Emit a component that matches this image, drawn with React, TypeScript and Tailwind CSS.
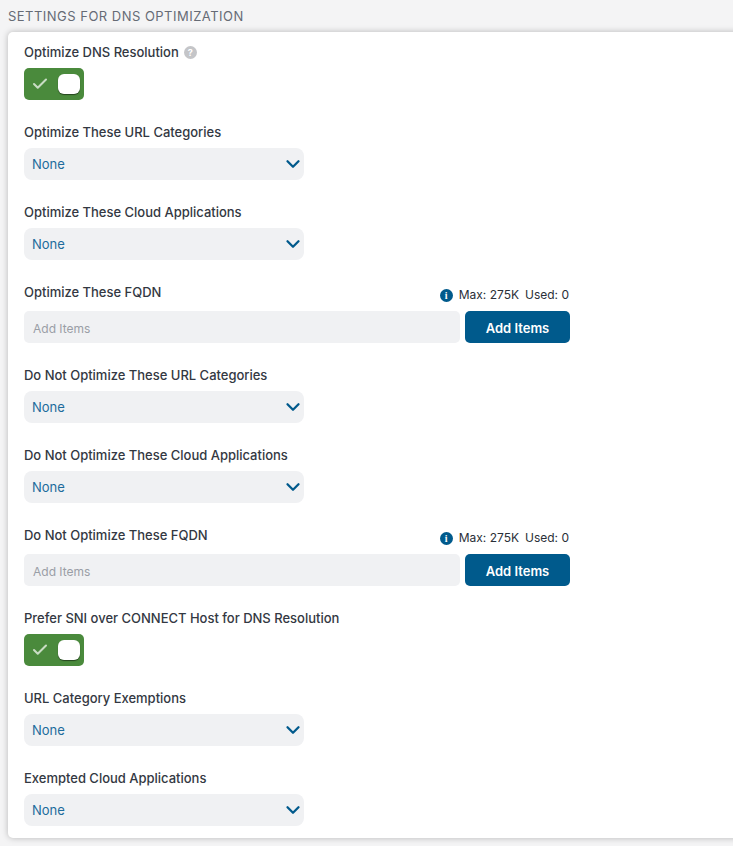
import React from 'react';
import { Check, ChevronDown } from 'lucide-react';

const Toggle = () => (
  <div className="w-[60px] h-8 rounded-[5px] bg-[#4a8a3c] flex items-center justify-between pl-[7px] pr-[4px]">
    <Check className="w-[18px] h-[18px] text-[#c9dcc4]" strokeWidth={2.75} />
    <div className="w-[22px] h-[20px] rounded-[6px] bg-white shadow-[0_1px_1px_rgba(0,0,0,0.5)]" />
  </div>
);

const Select = () => (
  <div className="w-[280px] h-8 rounded-[8px] bg-[#f0f1f3] flex items-center justify-between pl-2">
    <span className="text-[13px] text-[#1e6c9c] translate-y-[1px]">None</span>
    <ChevronDown className="w-[22px] h-[22px] text-[#005a8c]" strokeWidth={2.5} />
  </div>
);

const FqdnInput = () => (
  <div className="flex gap-[5px]">
    <div className="w-[436px] h-8 rounded-[5px] bg-[#f0f1f3] flex items-center pl-[9px]">
      <span className="text-xs text-[#9a9ea6] translate-y-[2px]">Add Items</span>
    </div>
    <button className="w-[105px] h-8 rounded-[5px] bg-[#005a8c] text-white text-[13px] font-semibold">
      <span className="inline-block translate-y-[2px]">Add Items</span>
    </button>
  </div>
);

const Label = ({ children }: { children: React.ReactNode }) => (
  <div className="h-4 leading-4 text-[13px] font-[450] tracking-[-0.01px] text-[#333842] mb-2">{children}</div>
);

const SelectField = ({ label }: { label: string }) => (
  <div>
    <Label>{label}</Label>
    <Select />
  </div>
);

const FqdnField = ({ label }: { label: string }) => (
  <div>
    <div className="w-[545px] h-4 flex items-center justify-between mb-[11px]">
      <span className="text-[13px] leading-4 font-[450] tracking-[-0.01px] text-[#333842]">{label}</span>
      <span className="flex items-center text-xs text-[#2a2f38] translate-y-[3px]">
        <span className="w-[13px] h-[13px] mr-[6px] rounded-full bg-[#005a8c] text-white text-[10px] leading-[13px] font-bold text-center font-['Liberation_Serif',serif]">i</span>
        <span className="mr-[6px]">Max: 275K</span>
        <span>Used: 0</span>
      </span>
    </div>
    <FqdnInput />
  </div>
);

export default function App() {
  return (
    <div className="h-[846px] overflow-hidden bg-[#f4f4f5] font-['Inter',sans-serif]">
      <div className="h-8 pl-2 flex items-center">
        <h2 className="text-[13px] leading-4 tracking-[0.48px] text-[#666b75] uppercase">Settings for DNS Optimization</h2>
      </div>
      <div className="ml-2 w-[760px] h-[806px] rounded-[5px] bg-white shadow-[0_0_6px_rgba(0,0,0,0.25)] pt-3 pl-4 flex flex-col gap-6">
        <div>
          <div className="h-4 flex items-center gap-[5px] mb-2">
            <span className="text-[13px] leading-4 font-[450] tracking-[-0.01px] text-[#333842]">Optimize DNS Resolution</span>
            <span className="w-[13px] h-[13px] rounded-full bg-[#c4c5c8] text-white text-[9px] leading-[13px] font-bold text-center">?</span>
          </div>
          <Toggle />
        </div>
        <SelectField label="Optimize These URL Categories" />
        <SelectField label="Optimize These Cloud Applications" />
        <FqdnField label="Optimize These FQDN" />
        <SelectField label="Do Not Optimize These URL Categories" />
        <SelectField label="Do Not Optimize These Cloud Applications" />
        <FqdnField label="Do Not Optimize These FQDN" />
        <div>
          <Label>Prefer SNI over CONNECT Host for DNS Resolution</Label>
          <Toggle />
        </div>
        <SelectField label="URL Category Exemptions" />
        <SelectField label="Exempted Cloud Applications" />
      </div>
    </div>
  );
}
